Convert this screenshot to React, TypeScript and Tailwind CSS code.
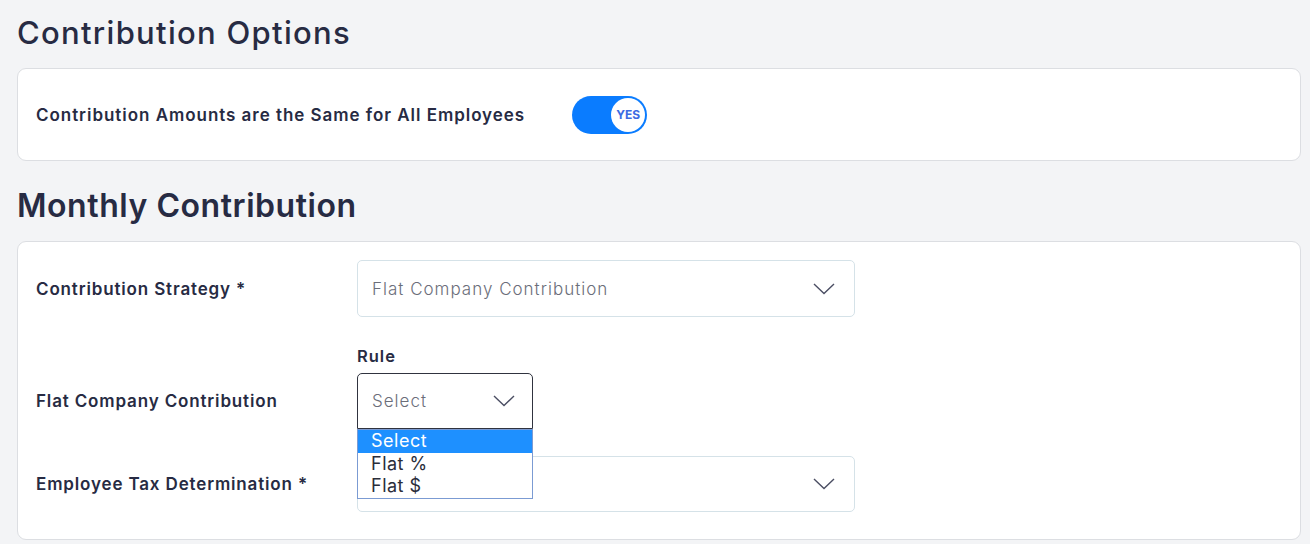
import React from "react";

const Chevron = ({ className = "" }: { className?: string }) => (
  <svg className={className} width="22" height="12" viewBox="0 0 22 12" fill="none">
    <path d="M1 1L11 10.5L21 1" stroke="#4b4e63" strokeWidth="1.4" />
  </svg>
);

const font = { fontFamily: 'Inter, "Open Sans", sans-serif' };

export default function App() {
  return (
    <div className="min-h-[544px] bg-[#f3f4f6] pl-[17px] pr-[9px] pt-[14px] text-[#272b43]" style={font}>
      <h2 className="text-[31px] leading-[38px] font-medium tracking-[1.3px]">Contribution Options</h2>
      <div className="mt-[16px] flex h-[93px] items-center rounded-[9px] border border-[#dcdee2] bg-white px-[18px]">
        <span className="pt-[2px] text-[17px] font-semibold tracking-[0.96px]">Contribution Amounts are the Same for All Employees</span>
        <div className="ml-[47px] flex h-[38px] w-[75px] items-center justify-end rounded-full bg-[#0a7cff] pr-[2px]">
          <div className="flex h-[34px] w-[34px] items-center justify-center rounded-full bg-white">
            <span className="text-[12px] font-bold text-[#3b6be3]">YES</span>
          </div>
        </div>
      </div>
      <h2 className="mt-[25px] text-[32px] leading-[40px] font-semibold tracking-[0.55px]">Monthly Contribution</h2>
      <div className="mt-[15px] rounded-[9px] border border-[#dcdee2] bg-white pb-[27px] pl-[18px] pt-[18px] text-[17px] tracking-[0.85px]">
        <div className="flex items-center">
          <div className="w-[321px] pt-[2px] font-semibold">Contribution Strategy *</div>
          <div className="flex h-[57px] w-[498px] items-center justify-between rounded-[5px] border border-[#d5e2e8] pl-[14px] pr-[19px]">
            <span className="pt-[2px] font-light tracking-[1px] text-[#6b6e7a]">Flat Company Contribution</span>
            <Chevron />
          </div>
        </div>
        <div className="mt-[29px] flex">
          <div className="w-[321px] pt-[27px]">
            <div className="flex h-[56px] items-center pt-[2px] font-semibold">Flat Company Contribution</div>
          </div>
          <div>
            <div className="text-[16.5px] font-semibold leading-[20px] tracking-[1px]">Rule</div>
            <div className="relative mt-[7px]">
              <div className="flex h-[56px] w-[176px] items-center justify-between rounded-t-[5px] border border-[#30333f] pl-[14px] pr-[17px]">
                <span className="pt-[2px] font-light tracking-[1px] text-[#6b6e7a]">Select</span>
                <Chevron />
              </div>
              <div className="absolute left-0 top-[56px] z-10 w-[176px] border border-[#7b9bd3] bg-white text-[18px] leading-[22.7px] tracking-[0.5px] text-[#2a2d3a]">
                <div className="bg-[#1e90ff] pl-[13px] text-white">Select</div>
                <div className="pl-[13px]">Flat %</div>
                <div className="pl-[13px]">Flat $</div>
              </div>
            </div>
          </div>
        </div>
        <div className="mt-[27px] flex items-center">
          <div className="w-[321px] pt-[2px] font-semibold">Employee Tax Determination *</div>
          <div className="flex h-[56px] w-[498px] items-center justify-end rounded-[5px] border border-[#d5e2e8] pl-[14px] pr-[19px]">
            <Chevron />
          </div>
        </div>
      </div>
    </div>
  );
}
